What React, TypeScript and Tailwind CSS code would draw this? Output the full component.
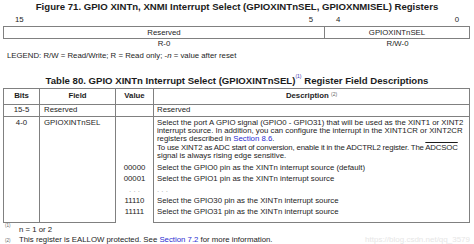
const bits = [
  { v: "00000", d: "Select the GPIO0 pin as the XINTn interrupt source (default)" },
  { v: "00001", d: "Select the GPIO1 pin as the XINTn interrupt source" },
  { v: ". . .", d: ". . .", dim: true },
  { v: "11110", d: "Select the GPIO30 pin as the XINTn interrupt source" },
  { v: "11111", d: "Select the GPIO31 pin as the XINTn interrupt source" },
];

export default function App() {
  return (
    <div className="w-[474px] h-[244px] bg-white overflow-hidden text-[#1c1c1c] font-['Liberation_Sans',Arial,sans-serif]">
      <h1 className="text-center font-bold text-[9.6px] leading-[14px]">
        Figure 71. GPIO XINTn, XNMI Interrupt Select (GPIOXINTnSEL, GPIOXNMISEL) Registers
      </h1>

      <div className="ml-[3px] w-[467px] text-[7.8px]">
        <div className="flex h-[12px] items-center">
          <div className="w-[322px] flex justify-between px-[12px]">
            <span>15</span>
            <span>5</span>
          </div>
          <div className="flex-1 flex justify-between px-[11px]">
            <span>4</span>
            <span>0</span>
          </div>
        </div>
        <div className="flex h-[13px] border border-[#808080]">
          <div className="w-[321px] flex items-center justify-center border-r border-[#808080]">Reserved</div>
          <div className="flex-1 flex items-center justify-center">GPIOXINTnSEL</div>
        </div>
        <div className="flex h-[9px] items-center">
          <div className="w-[322px] text-center">R-0</div>
          <div className="flex-1 text-center">R/W-0</div>
        </div>
        <p className="h-[13px] flex items-center pl-[4px] mt-[1px]">
          LEGEND: R/W = Read/Write; R = Read only; -<i>n</i>&nbsp;= value after reset
        </p>
      </div>

      <h2 className="mt-[12px] text-center font-bold text-[9.6px] leading-[14px]">
        Table 80. GPIO XINTn Interrupt Select (GPIOXINTnSEL)
        <sup className="text-[5px] font-normal text-[#3b3bb0] align-[4px]">(1)</sup> Register Field Descriptions
      </h2>

      <table className="ml-[3px] w-[467px] table-fixed border-collapse text-[7.8px] leading-[8.2px]">
        <colgroup>
          <col className="w-[36px]" />
          <col className="w-[76px]" />
          <col className="w-[38px]" />
          <col />
        </colgroup>
        <thead>
          <tr className="h-[16px] font-bold">
            <th className="border border-[#808080]">Bits</th>
            <th className="border border-[#808080]">Field</th>
            <th className="border border-[#808080]">Value</th>
            <th className="border border-[#808080]">
              Description <sup className="text-[5px] font-normal text-[#666]">(2)</sup>
            </th>
          </tr>
        </thead>
        <tbody>
          <tr className="h-[12px]">
            <td className="border border-[#808080] text-center">15-5</td>
            <td className="border border-[#808080] pl-[4px]">Reserved</td>
            <td className="border border-[#808080]" />
            <td className="border border-[#808080] pl-[3px]">Reserved</td>
          </tr>
          <tr>
            <td rowSpan={6} className="border border-[#808080] text-center align-top pt-[2px]">4-0</td>
            <td rowSpan={6} className="border border-[#808080] pl-[4px] align-top pt-[2px]">GPIOXINTnSEL</td>
            <td className="border-r border-[#808080]" />
            <td className="pl-[3px] pt-[2px] pb-[2px] border-r border-[#808080] whitespace-nowrap">
              Select the port A GPIO signal (GPIO0 - GPIO31) that will be used as the XINT1 or XINT2
              <br />
              interrupt source. In addition, you can configure the interrupt in the XINT1CR or XINT2CR
              <br />
              registers described in <span className="text-[#2b2bd0]">Section 8.6</span>.
              <br />
              <span className="tracking-[-0.16px]">
                To use XINT2 as ADC start of conversion, enable it in the ADCTRL2 register. The{" "}
                <span className="overline">ADCSOC</span>
              </span>
              <br />
              signal is always rising edge sensitive.
            </td>
          </tr>
          {bits.map((b, i) => {
            const last = i === bits.length - 1;
            return (
              <tr key={b.v} className="leading-[11px]">
                <td className={`border-r border-[#808080] text-center align-top ${last ? "pb-[5px]" : ""} ${b.dim ? "text-[#aaa]" : ""}`}>
                  {b.v}
                </td>
                <td className={`pl-[3px] border-r border-[#808080] align-top ${last ? "pb-[5px] border-b" : ""} ${b.dim ? "text-[#aaa]" : ""}`}>
                  {b.d}
                </td>
              </tr>
            );
          })}
        </tbody>
      </table>

      <div className="mt-[2px] text-[7.8px] leading-[10px]">
        <div className="flex">
          <sup className="w-[19px] pl-[5px] text-[4.5px] text-[#666] top-[1px]">(1)</sup>
          <span>n = 1 or 2</span>
        </div>
        <div className="flex items-center">
          <sup className="w-[19px] pl-[5px] text-[4.5px] text-[#666] top-[1px]">(2)</sup>
          <span>
            This register is EALLOW protected. See <span className="text-[#2b2bd0]">Section 7.2</span> for more information.
          </span>
          <span className="ml-auto mr-[4px] text-[8px] text-[#e6e6e6]">https://blog.csdn.net/qq_3579</span>
        </div>
      </div>
    </div>
  );
}
